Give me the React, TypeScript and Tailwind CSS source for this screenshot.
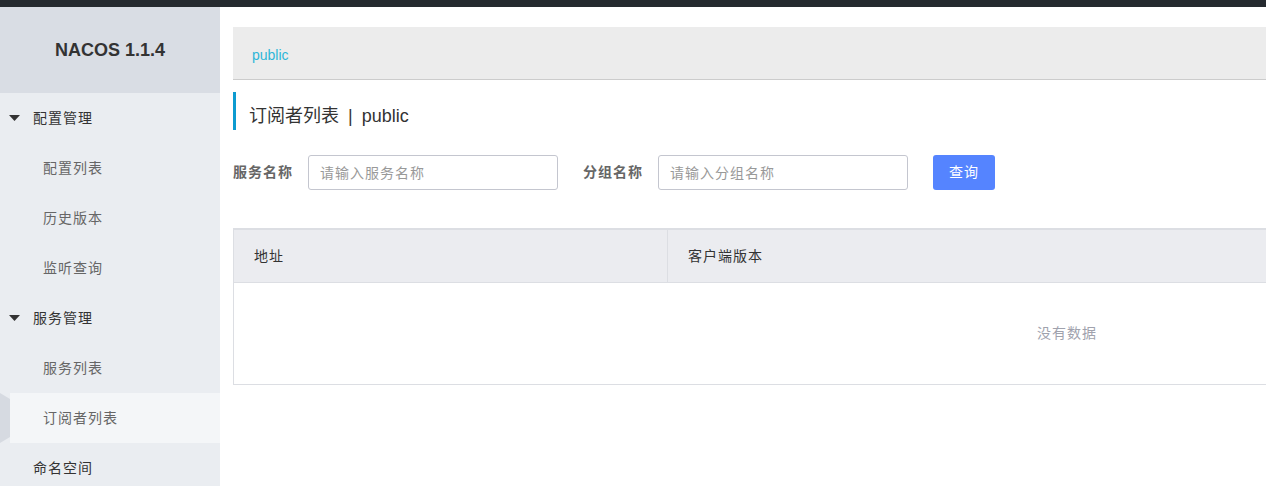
import React from "react";

const FONT = { fontFamily: '"Liberation Sans", "Noto Sans CJK SC", sans-serif' };

function Caret() {
  return (
    <svg width="11" height="6" viewBox="0 0 11 6" className="shrink-0">
      <path d="M0 0h11L5.5 6z" fill="#333" />
    </svg>
  );
}

function Group({ label }: { label: string }) {
  return (
    <div className="flex h-[50px] shrink-0 items-center gap-[13px] pl-[9px] text-[14px] tracking-[1px] text-[#333]">
      <Caret />
      <span>{label}</span>
    </div>
  );
}

function Item({ label, active }: { label: string; active?: boolean }) {
  if (active) {
    return (
      <div className="flex h-[50px] shrink-0">
        <div className="w-[10px] bg-[#d6dae1] [clip-path:polygon(0_0,100%_12%,100%_88%,0_100%)]" />
        <div className="flex flex-1 items-center bg-[#f4f6f8] pl-[33px] text-[14px] tracking-[1px] text-[#666]">
          {label}
        </div>
      </div>
    );
  }
  return (
    <div className="flex h-[50px] shrink-0 items-center pl-[43px] text-[14px] tracking-[1px] text-[#666]">
      {label}
    </div>
  );
}

function Sidebar() {
  return (
    <aside className="flex w-[220px] shrink-0 flex-col overflow-hidden bg-[#eaedf1]">
      <div className="flex h-[86px] shrink-0 items-center justify-center bg-[#d9dde4] text-[18px] font-bold text-[#333]">
        NACOS 1.1.4
      </div>
      <Group label="配置管理" />
      <Item label="配置列表" />
      <Item label="历史版本" />
      <Item label="监听查询" />
      <Group label="服务管理" />
      <Item label="服务列表" />
      <Item label="订阅者列表" active />
      <div className="flex h-[50px] shrink-0 items-center pl-[33px] text-[14px] tracking-[1px] text-[#333]">
        命名空间
      </div>
    </aside>
  );
}

function Field({ label, placeholder }: { label: string; placeholder: string }) {
  return (
    <div className="flex items-center">
      <span className="w-[75px] text-[14px] font-bold tracking-[1px] text-[#666]">{label}</span>
      <input
        type="text"
        placeholder={placeholder}
        className="h-[35px] w-[250px] rounded-[3px] border border-[#c4c6cf] bg-white px-[11px] text-[14px] tracking-[1px] text-[#333] outline-none placeholder:text-[#999]"
      />
    </div>
  );
}

export default function App() {
  return (
    <div className="h-[486px] w-[1266px] overflow-hidden bg-white" style={FONT}>
      <div className="h-[7px] bg-[#252a2f]" />
      <div className="flex h-[479px]">
        <Sidebar />
        <main className="w-[1681px] shrink-0 pl-[13px] pt-[20px]">
          <div className="flex h-[53px] items-center border-b border-[#ccc] bg-[#ececec] pl-[19px] pt-[4px] text-[14px] text-[#2eb6d8]">
            public
          </div>

          <div className="mt-[12px] flex h-[38px] items-center border-l-[3px] border-[#0d9bd0] pl-[13px] pt-[10px] text-[18px] text-[#333]">
            订阅者列表 <span className="mx-[9px]">|</span> public
          </div>

          <div className="mt-[25px] flex items-center gap-[25px]">
            <Field label="服务名称" placeholder="请输入服务名称" />
            <Field label="分组名称" placeholder="请输入分组名称" />
            <button className="h-[35px] w-[62px] rounded-[3px] bg-[#5584ff] text-[14px] tracking-[1px] text-white">
              查询
            </button>
          </div>

          <div className="mt-[38px] w-[1668px] border border-t-2 border-[#dcdee3]">
            <div className="flex h-[53px] border-b border-[#dcdee3] bg-[#ebecf0] text-[14px] tracking-[1px] text-[#333]">
              <div className="flex w-[434px] items-center border-r border-[#dcdee3] pl-[20px]">
                地址
              </div>
              <div className="flex flex-1 items-center pl-[20px]">客户端版本</div>
            </div>
            <div className="flex h-[101px] items-center justify-center text-[14px] tracking-[1px] text-[#a0a2ad]">
              没有数据
            </div>
          </div>
        </main>
      </div>
    </div>
  );
}
